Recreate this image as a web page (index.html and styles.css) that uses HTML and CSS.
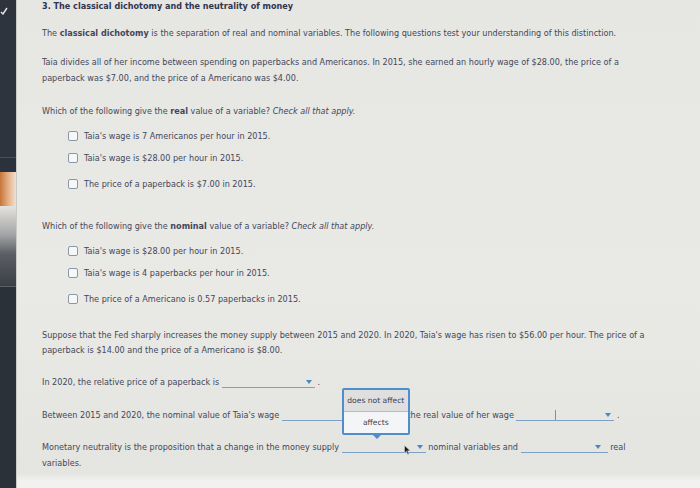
FILE: index.html
```html
<!DOCTYPE html>
<html>
<head>
<meta charset="utf-8">
<link rel="stylesheet" href="styles.css">
</head>
<body>
<div class="page">
  <aside class="rail">
    <svg class="rail-check" width="8" height="8" viewBox="0 0 8 8"><path d="M1 5 L3 7 L7 1" fill="none" stroke="#e8e8e8" stroke-width="1.4"/></svg>
    <div class="rail-seg seg-a"></div>
    <div class="rail-seg seg-b"></div>
    <div class="rail-seg seg-c"></div>
    <div class="rail-seg seg-d"></div>
    <div class="rail-seg seg-e"></div>
  </aside>
  <main class="content">
    <h2 class="title">3. The classical dichotomy and the neutrality of money</h2>
    <p class="intro">The <b>classical dichotomy</b> is the separation of real and nominal variables. The following questions test your understanding of this distinction.</p>
    <p class="story">Taia divides all of her income between spending on paperbacks and Americanos. In 2015, she earned an hourly wage of $28.00, the price of a paperback was $7.00, and the price of a Americano was $4.00.</p>

    <p class="question">Which of the following give the <b>real</b> value of a variable? <i>Check all that apply.</i></p>
    <ul class="options">
      <li class="opt opt-1"><span class="box"></span>Taia's wage is 7 Americanos per hour in 2015.</li>
      <li class="opt opt-2"><span class="box"></span>Taia's wage is $28.00 per hour in 2015.</li>
      <li class="opt opt-3"><span class="box"></span>The price of a paperback is $7.00 in 2015.</li>
    </ul>

    <p class="question q2">Which of the following give the <b>nominal</b> value of a variable? <i>Check all that apply.</i></p>
    <ul class="options">
      <li class="opt opt-1"><span class="box"></span>Taia's wage is $28.00 per hour in 2015.</li>
      <li class="opt opt-2"><span class="box"></span>Taia's wage is 4 paperbacks per hour in 2015.</li>
      <li class="opt opt-3"><span class="box"></span>The price of a Americano is 0.57 paperbacks in 2015.</li>
    </ul>

    <p class="story2">Suppose that the Fed sharply increases the money supply between 2015 and 2020. In 2020, Taia's wage has risen to $56.00 per hour. The price of a paperback is $14.00 and the price of a Americano is $8.00.</p>

    <p class="fill fill-1">In 2020, the relative price of a paperback is <span class="blank w-rel"><span class="caret"></span></span> .</p>
    <p class="fill fill-2">Between 2015 and 2020, the nominal value of Taia's wage <span class="blank w-nom"><span class="menu"><span class="menu-item hl">does not affect</span><span class="menu-item">affects</span><span class="menu-tip"></span></span></span> the real value of her wage <span class="blank w-real"><span class="ibeam"></span><span class="caret"></span></span> .</p>
    <p class="fill fill-3"><span>Monetary neutrality is the proposition that a change in the money supply</span> <span class="blank w-mon"><svg class="pointer" width="7" height="10" viewBox="0 0 7 10"><path d="M0.5 0.5 L0.5 8 L2.4 6.3 L3.8 9.4 L5 8.9 L3.6 5.8 L6.2 5.8 Z" fill="#1c1c1c" stroke="#e0e0e0" stroke-width="0.5"/></svg><span class="caret"></span></span> <span>nominal variables and</span> <span class="blank w-and"><span class="caret"></span></span> <span>real</span> <span>variables.</span></p>
  </main>
</div>
</body>
</html>
```
FILE: styles.css
```css
html, body {
  margin: 0;
  padding: 0;
}
body {
  width: 700px;
  height: 488px;
  overflow: hidden;
  font-family: "DejaVu Sans", Verdana, sans-serif;
  color: #43475a;
}
.page {
  display: flex;
  height: 488px;
  background: linear-gradient(180deg, #e6e6e3 0%, #e9e9e6 60%, #e4e4e1 97%, #f1f1ef 98.5%);
}
.rail {
  width: 16px;
  flex: none;
  display: flex;
  flex-direction: column;
  background: #2b323b;
  border-right: 1px solid #c9c9c6;
  position: relative;
}
.rail-check {
  position: absolute;
  left: 0;
  top: 7px;
}
.seg-a { height: 157px; background: #2d343e; border-bottom: 1px solid #4a5059; }
.seg-b { height: 14px; background: #2b323b; }
.seg-c { height: 34px; background: linear-gradient(90deg, #c9743a 0%, #e6b48c 55%, #efe1d4 100%); }
.seg-d { height: 80px; background: linear-gradient(180deg, #e6e3df 0%, #a5a6a7 35%, #5b5f64 60%, #3a3f46 100%); border-bottom: 1px solid #5a6068; }
.seg-e { flex: 1; background: #2a3139; }

.content {
  flex: 1;
  padding-left: 25px;
  font-size: 8.1px;
  line-height: 16px;
}
.content p, .content ul, .content h2 {
  margin: 0;
  padding: 0;
}
.title {
  font-size: 8.1px;
  font-weight: bold;
  color: #30354f;
  margin-top: -2px !important;
  line-height: 16px;
}
.intro { margin-top: 11px !important; }
.story { margin-top: 13px !important; width: 588px; }
.question { margin-top: 17px !important; }
.q2 { margin-top: 26px !important; }
.options { list-style: none; padding-left: 26px !important; }
.opt { display: flex; align-items: center; gap: 6px; height: 16px; }
.opt-1 { margin-top: 9px; }
.opt-2 { margin-top: 6px; }
.opt-3 { margin-top: 10px; }
.box {
  width: 8px;
  height: 8px;
  border: 1px solid #8797ac;
  border-radius: 2px;
  background: #f7f7f7;
  flex: none;
}
.story2 { margin-top: 21px !important; line-height: 15px; width: 612px; }
.fill-1 { margin-top: 16px !important; }
.fill-2 { margin-top: 17px !important; }
.fill-3 { margin-top: 16px !important; width: 592px; }

.blank {
  display: inline-block;
  position: relative;
  height: 10px;
  vertical-align: -3px;
  border-bottom: 1px solid #7da1c6;
}
.w-rel { width: 93px; }
.w-nom { width: 123px; }
.w-real { width: 98px; }
.w-mon { width: 84px; }
.w-and { width: 87px; }
.caret {
  position: absolute;
  right: 3px;
  top: 3px;
  width: 0;
  height: 0;
  border-left: 3.5px solid transparent;
  border-right: 3.5px solid transparent;
  border-top: 4px solid #4c86bf;
}
.w-and .caret { right: 7px; }
.ibeam {
  position: absolute;
  left: 39px;
  top: 0;
  width: 1px;
  height: 10px;
  background: #6f95bd;
}
.pointer {
  position: absolute;
  left: 62px;
  top: 3px;
}
.menu {
  position: absolute;
  left: 60px;
  top: -22px;
  width: 64px;
  border: 2px solid #4f8ecb;
  border-radius: 2px;
  background: #f4f5f6;
  display: flex;
  flex-direction: column;
  z-index: 2;
}
.menu-item {
  height: 21px;
  line-height: 21px;
  text-align: center;
  font-size: 7.6px;
  color: #3e4252;
}
.menu-item.hl {
  background: #dedfde;
  border-bottom: 1px solid #b8bcc2;
}
.menu-tip {
  position: absolute;
  left: 28px;
  bottom: -6px;
  width: 0;
  height: 0;
  border-left: 5px solid transparent;
  border-right: 5px solid transparent;
  border-top: 5px solid #4f8ecb;
}
```
